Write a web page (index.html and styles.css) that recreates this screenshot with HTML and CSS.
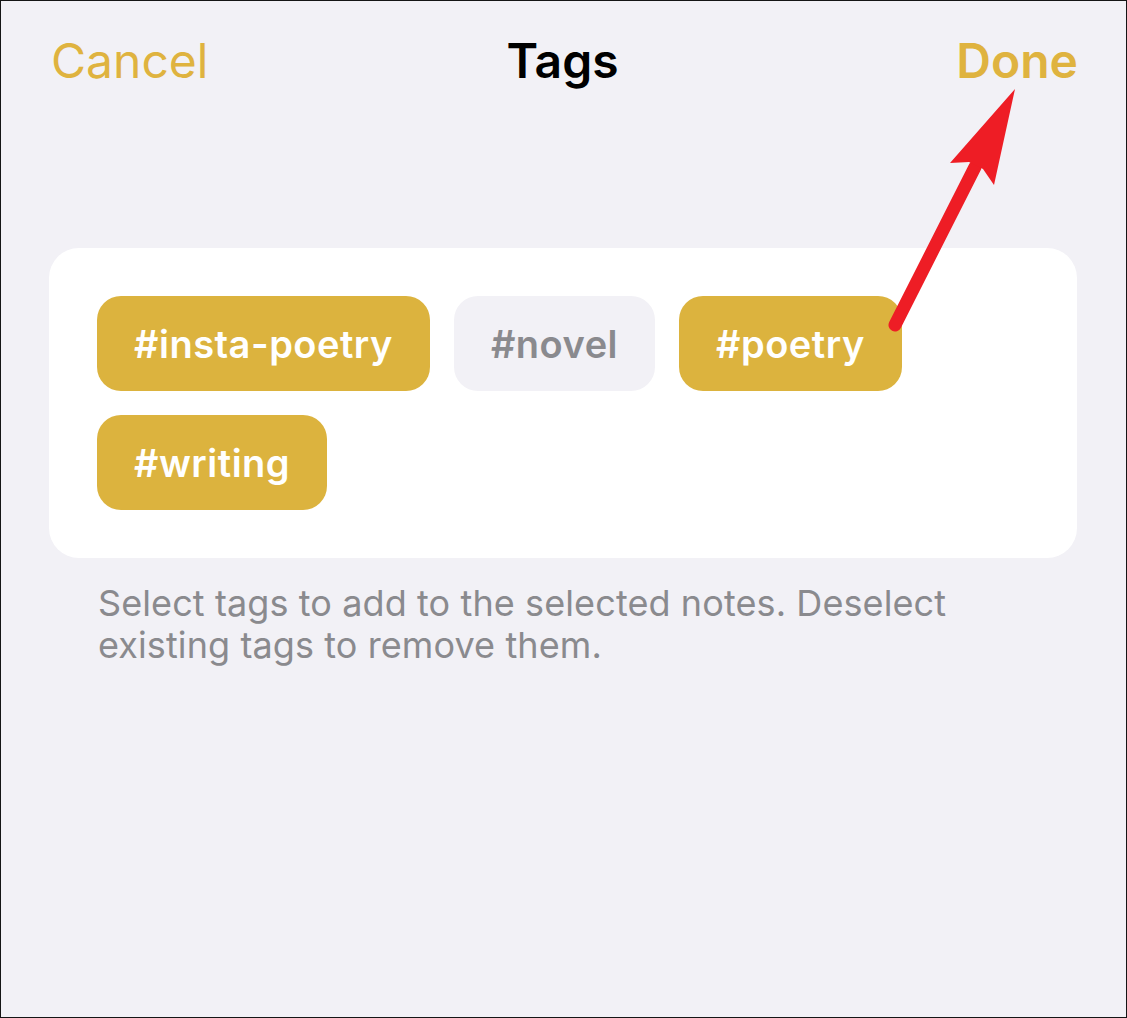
FILE: index.html
```html
<!DOCTYPE html>
<html lang="en">
<head>
    <meta charset="UTF-8">
    <meta name="viewport" content="width=device-width, initial-scale=1.0">
    <title>Tags</title>
    <link rel="stylesheet" href="styles.css">
</head>
<body>
    <div class="sheet">
        <header class="nav">
            <button class="nav-btn cancel">Cancel</button>
            <h1 class="title">Tags</h1>
            <button class="nav-btn done">Done</button>
        </header>

        <section class="tag-card">
            <div class="tag-list">
                <button class="tag selected">#insta-poetry</button>
                <button class="tag">#novel</button>
                <button class="tag selected">#poetry</button>
                <button class="tag selected">#writing</button>
            </div>
        </section>

        <p class="hint">Select tags to add to the selected notes. Deselect existing tags to remove them.</p>

        <!-- annotation arrow pointing at Done -->
        <svg class="arrow" width="1127" height="1018" viewBox="0 0 1127 1018">
            <line x1="895" y1="325" x2="975" y2="167" stroke="#ee1d25" stroke-width="13" stroke-linecap="round"/>
            <polygon points="1015,89 950,163 969,162 983,169 994,185" fill="#ee1d25"/>
        </svg>
    </div>
</body>
</html>
```

FILE: styles.css
```css
* {
    margin: 0;
    padding: 0;
    box-sizing: border-box;
}

body {
    background: #fff;
    font-family: Inter, 'Noto Sans', sans-serif;
}

.sheet {
    position: relative;
    width: 1127px;
    height: 1018px;
    background: #f2f1f6;
    border: 1px solid #151515;
    overflow: hidden;
}

.nav {
    display: grid;
    grid-template-columns: 1fr auto 1fr;
    align-items: start;
    padding: 30px 48px 0 50px;
    height: 122px;
}

.nav-btn {
    border: none;
    background: none;
    font-family: inherit;
    font-size: 48px;
    line-height: 60px;
    color: #dfb33f;
    cursor: pointer;
}

.cancel {
    justify-self: start;
    font-weight: 400;
}

.done {
    justify-self: end;
    font-weight: 600;
}

.title {
    font-size: 48px;
    line-height: 60px;
    font-weight: 600;
    color: #000;
    margin-right: 4px;
}

.tag-card {
    margin: 125px 49px 0 48px;
    background: #fff;
    border-radius: 30px;
    padding: 48px;
}

.tag-list {
    display: flex;
    flex-wrap: wrap;
    gap: 24px;
}

.tag {
    height: 95px;
    padding: 0 37px;
    border: none;
    border-radius: 24px;
    font-family: inherit;
    font-size: 38px;
    font-weight: 600;
    letter-spacing: 0.5px;
    background: #f2f1f6;
    color: #8a8a8e;
    cursor: pointer;
}

.tag.selected {
    background: #dcb33e;
    color: #fff;
}

.hint {
    margin: 24px 140px 0 97px;
    font-size: 36px;
    line-height: 42px;
    letter-spacing: 0.1px;
    color: #8a8a8e;
}

.arrow {
    position: absolute;
    top: -1px;
    left: -1px;
    pointer-events: none;
}
```
